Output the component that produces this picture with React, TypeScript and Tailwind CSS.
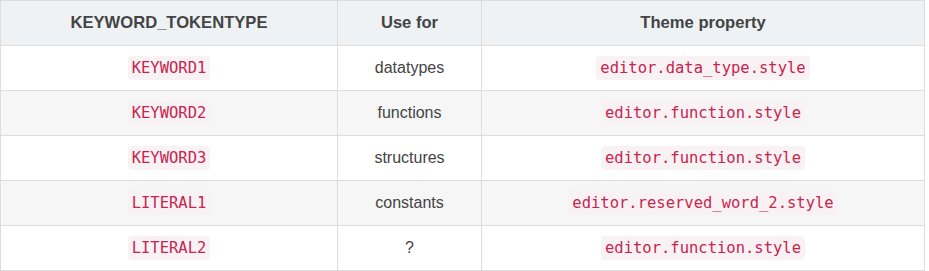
const rows = [
  { token: "KEYWORD1", use: "datatypes", prop: "editor.data_type.style" },
  { token: "KEYWORD2", use: "functions", prop: "editor.function.style" },
  { token: "KEYWORD3", use: "structures", prop: "editor.function.style" },
  { token: "LITERAL1", use: "constants", prop: "editor.reserved_word_2.style" },
  { token: "LITERAL2", use: "?", prop: "editor.function.style" },
];

function Code({ children }: { children: string }) {
  return (
    <code className="rounded-[4px] bg-[#f9f2f4] px-[4px] py-[3px] font-['DejaVu_Sans_Mono',monospace] text-[15.5px] text-[#c7254e]">
      {children}
    </code>
  );
}

export default function App() {
  return (
    <div className="bg-white font-['Liberation_Sans',Arial,sans-serif]">
      <table className="w-[925px] table-fixed border-collapse border border-[#dddddd] text-center">
        <colgroup>
          <col className="w-[337px]" />
          <col className="w-[144px]" />
          <col />
        </colgroup>
        <thead>
          <tr className="h-[45px] bg-[#eef2f5] text-[16.6px] font-bold text-[#444]">
            <th className="border border-[#dddddd]">KEYWORD_TOKENTYPE</th>
            <th className="border border-[#dddddd]">Use for</th>
            <th className="border border-[#dddddd]">Theme property</th>
          </tr>
        </thead>
        <tbody>
          {rows.map((row, i) => (
            <tr
              key={row.token}
              className={`h-[45px] text-[16px] text-[#444] ${i % 2 === 1 ? "bg-[#f6f6f6]" : "bg-white"}`}
            >
              <td className="border border-[#dddddd]">
                <Code>{row.token}</Code>
              </td>
              <td className="border border-[#dddddd]">{row.use}</td>
              <td className="border border-[#dddddd]">
                <Code>{row.prop}</Code>
              </td>
            </tr>
          ))}
        </tbody>
      </table>
    </div>
  );
}
